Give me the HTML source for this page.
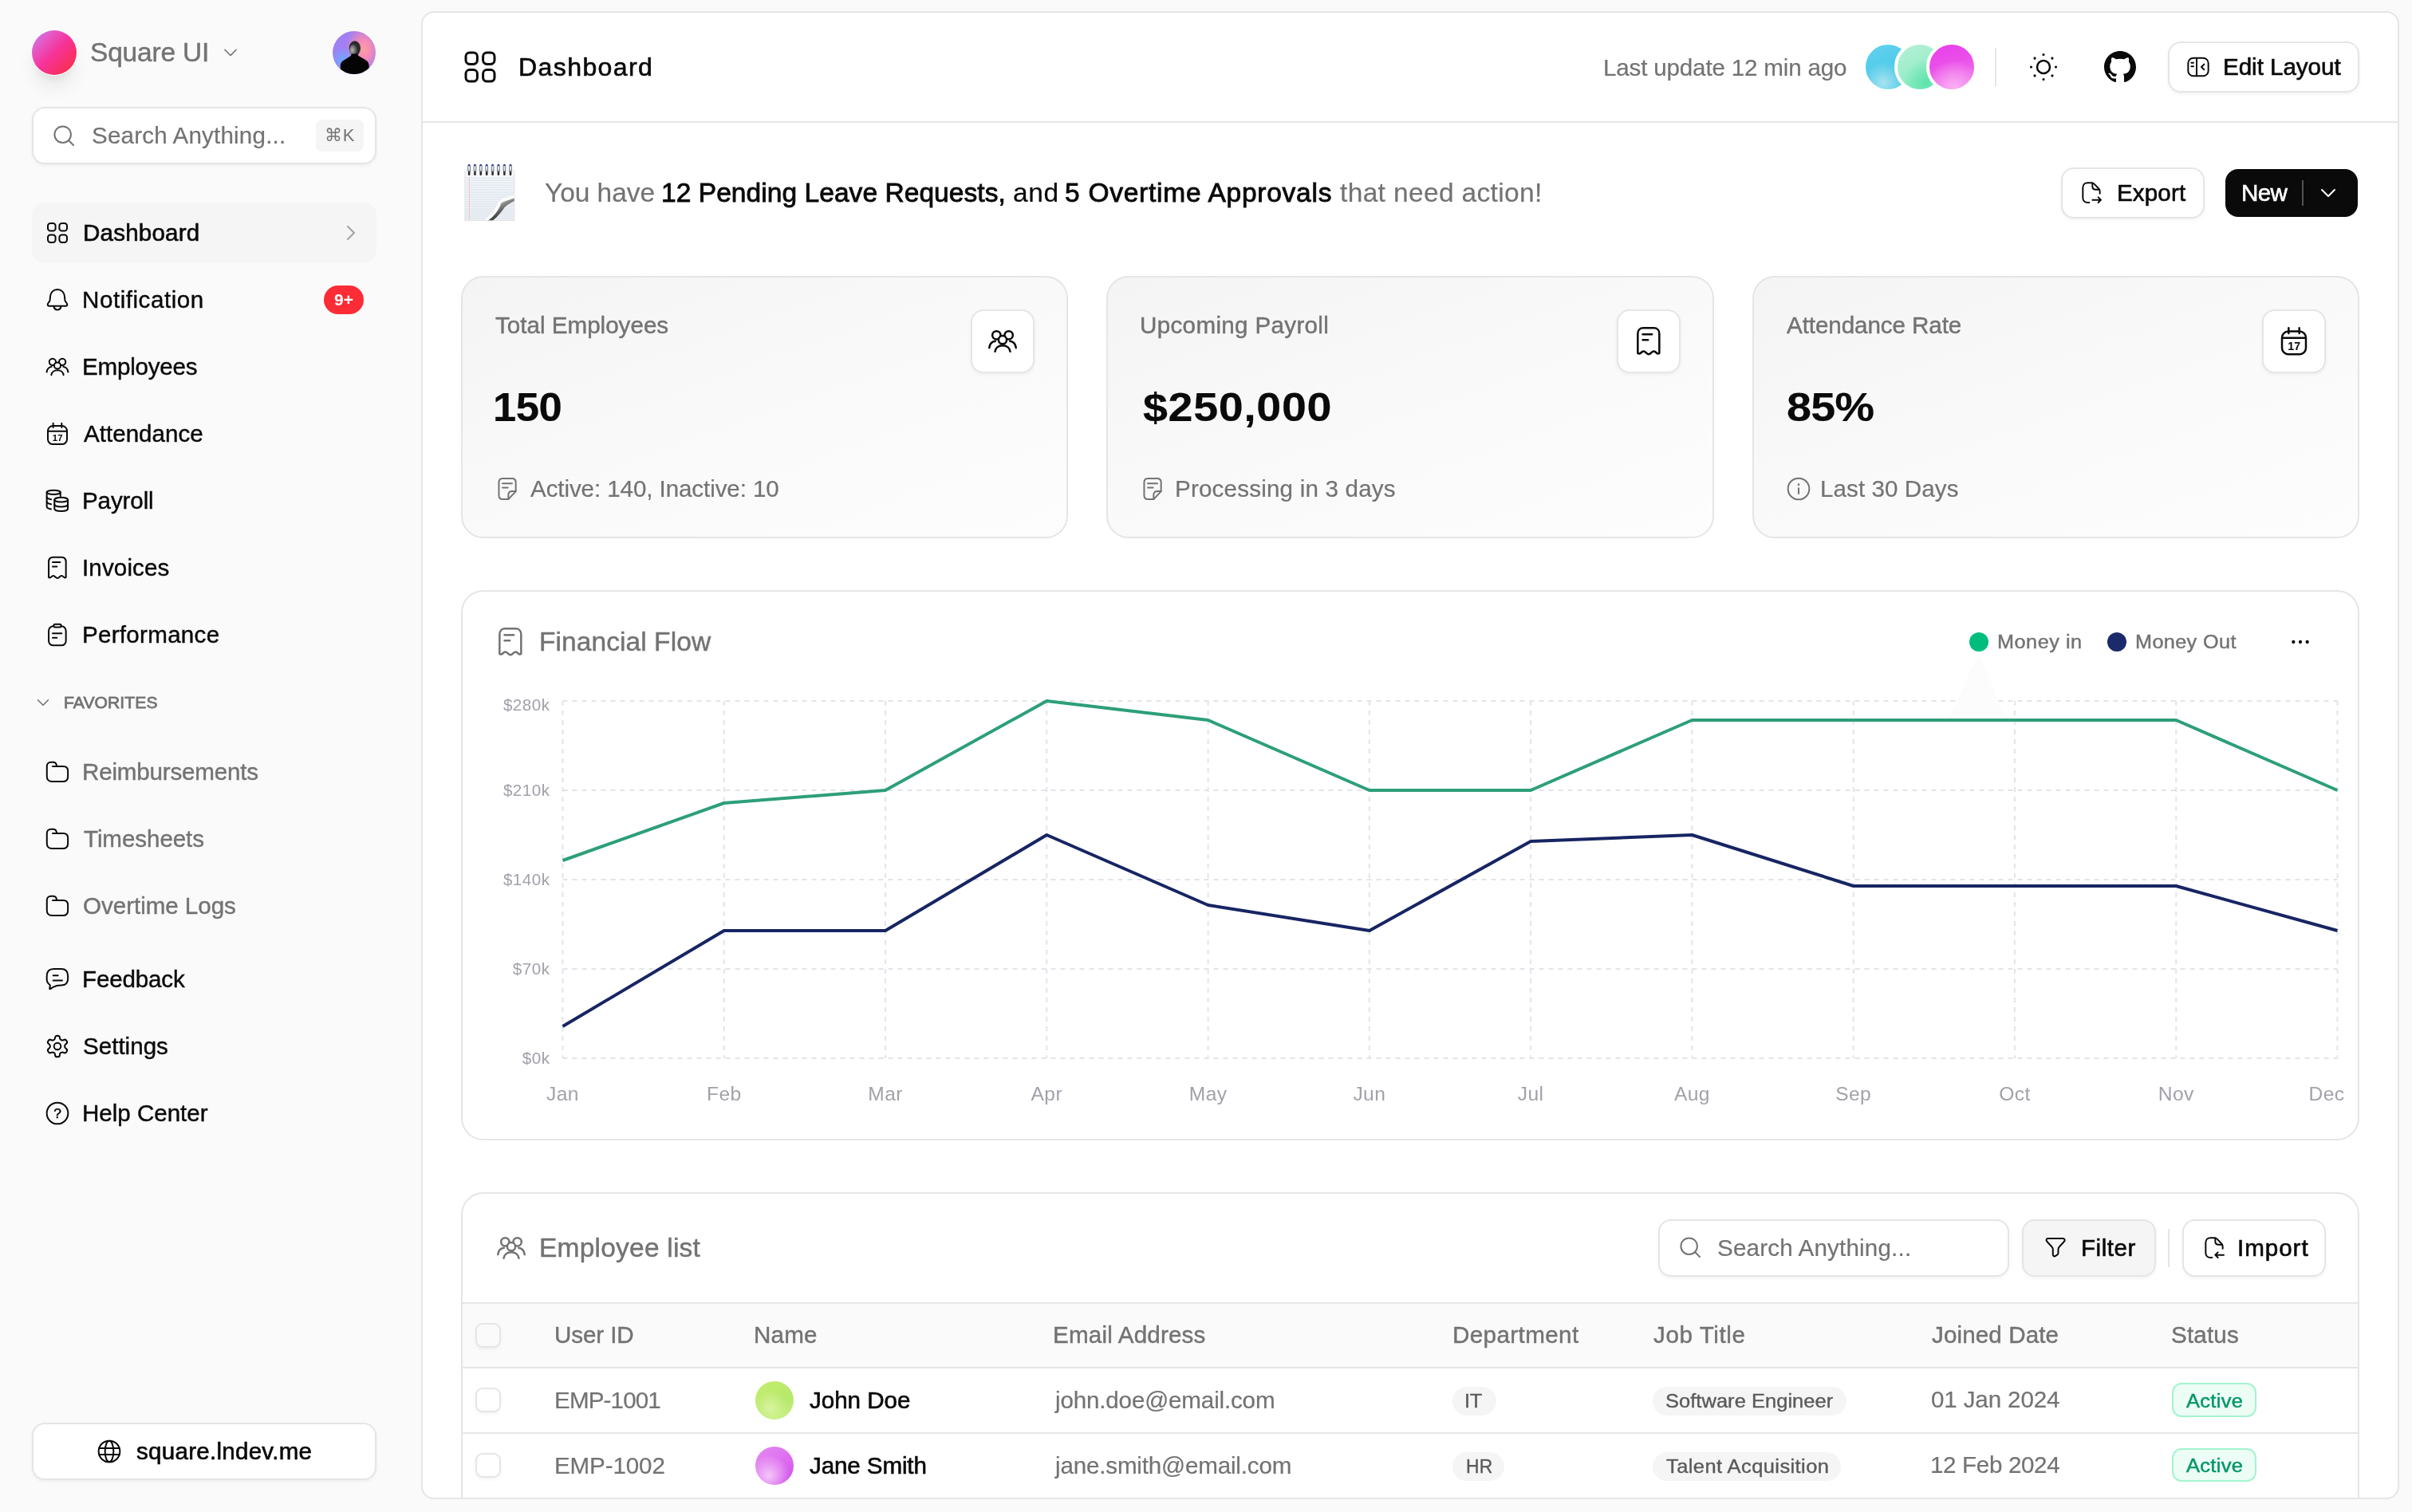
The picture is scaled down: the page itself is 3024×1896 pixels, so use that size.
<!DOCTYPE html>
<html lang="en">
<head>
<meta charset="utf-8">
<title>Square UI - Dashboard</title>
<style>
*{box-sizing:border-box;margin:0;padding:0}
html{zoom:2;background:#fafafa}
body{will-change:transform;width:1512px;height:948px;position:relative;overflow:hidden;background:#fafafa;color:#0a0a0a;
 font-family:"Liberation Sans",sans-serif;font-size:14px;line-height:20px}
svg{display:block;overflow:visible}
.ic{fill:none;stroke:currentColor;stroke-width:1.5;stroke-linecap:round;stroke-linejoin:round}
.abs{position:absolute}
.muted{color:#737373}
.t{position:absolute;white-space:nowrap;line-height:1;transform:scaleX(1.035);transform-origin:0 50%;-webkit-text-stroke:.1px currentColor}
.nv{-webkit-text-stroke:.2px currentColor}
.m{-webkit-text-stroke:.3px currentColor}
.m2{-webkit-text-stroke:.22px currentColor}
.sb{color:#0a0a0a;-webkit-text-stroke:.42px #0a0a0a}
#logo{left:20px;top:19px;width:28px;height:28px;border-radius:50%;background:linear-gradient(135deg,#c084fc 0%,#e657c4 27%,#f6339a 50%,#f83068 75%,#fb2c36 100%);box-shadow:0 0 0 .5px rgba(255,255,255,.9),0 9px 13px -3px rgba(0,0,0,.10),0 4px 6px -3px rgba(0,0,0,.08)}
#ava{left:208.5px;top:19.5px;width:27px;height:27px;border-radius:50%;overflow:hidden;background:radial-gradient(circle at 24% 68%,#6fa8ff 0%,rgba(111,168,255,0) 30%),radial-gradient(ellipse 42% 55% at 72% 42%,#fba09e 0%,#f58ab8 38%,rgba(240,138,200,0) 100%),#a080f2}
.sbox{left:20px;top:67px;width:216px;height:36px;background:#fff;border:1px solid #e5e5e5;border-radius:8px;box-shadow:0 1px 2px rgba(0,0,0,.05)}
.kbd{left:198px;top:75px;width:30px;height:20px;background:#f5f5f5;border-radius:4px;color:#737373;font-size:11px;text-align:center;line-height:20px;letter-spacing:.2px}
.nav{position:absolute;left:20px;width:216px;height:38px;border-radius:8px}
.nav svg{--bg:#fafafa;position:absolute;left:8px;top:11px;width:16px;height:16px}

.nav.on{background:#f5f5f5}
.nav.on svg{--bg:#f5f5f5}


.badge9{position:absolute;right:8px;top:10px;width:25px;height:18px;border-radius:9px;background:#fb2c36;color:#fff;font-size:10.5px;font-weight:700;text-align:center;line-height:18px}
#foot{left:20px;top:892px;width:216px;height:36px;background:#fff;border:1px solid #e5e5e5;border-radius:8px;box-shadow:0 1px 2px rgba(0,0,0,.05)}
#panel{left:264px;top:7px;width:1240px;height:933px;background:#fff;border:1px solid #e5e5e5;border-radius:8px;overflow:hidden}
#hdr{left:0;top:0;width:1238px;height:69px;border-bottom:1px solid #e5e5e5}
.btn{position:absolute;background:#fff;border:1px solid #e5e5e5;border-radius:8px;box-shadow:0 1px 2px rgba(0,0,0,.05)}
.card{position:absolute;border:1px solid #e5e5e5;border-radius:14px;background:#fff}
.stat{background:linear-gradient(160deg,#f4f4f4 0%,#f9f9f9 45%,#fdfdfd 100%)}
.ibox{position:absolute;right:20px;top:20px;width:40px;height:40px;background:#fff;border:1px solid #e5e5e5;border-radius:8px;box-shadow:0 1px 2px rgba(0,0,0,.05);display:flex;align-items:center;justify-content:center}
.val{font-weight:700;-webkit-text-stroke:.1px #0a0a0a;transform:scaleX(1.1)}
.ax{fill:#a1a1aa;font-family:"Liberation Sans",sans-serif}
.pill{position:absolute;height:18px;border-radius:9px;background:#f5f5f5;color:#5f5f5f;font-size:12.2px;line-height:18px;padding:0 8px;white-space:nowrap;letter-spacing:.25px;-webkit-text-stroke:.2px currentColor}
.act{position:absolute;height:22px;border-radius:6px;background:#ecfdf5;border:1px solid #a4f4cf;color:#059669;font-size:12.2px;line-height:20px;padding:0 7.5px;white-space:nowrap;letter-spacing:.25px;-webkit-text-stroke:.25px currentColor}
.cb{position:absolute;width:15.8px;height:15.8px;border-radius:4.5px;background:transparent;border:1px solid #e5e5e5;box-shadow:0 1px 2px rgba(0,0,0,.05)}
.pillbg{position:absolute;height:18px;border-radius:9px;background:#f5f5f5}
.pilltx{color:#5a5a5a;-webkit-text-stroke:.2px currentColor}
.actbg{position:absolute;height:21.4px;border-radius:6px;background:#ecfdf5;border:1px solid #a4f4cf}
.acttx{color:#059669;-webkit-text-stroke:.25px currentColor}

</style>
</head>
<body>
<!-- SIDEBAR -->
<div id="logo" class="abs"></div>
<div class="t muted m2" style="left:56.45px;top:25px;font-size:16.2px;letter-spacing:-0.092px;">Square UI</div>
<svg class="ic abs muted" style="left:137.5px;top:25.9px;width:14px;height:14px" viewBox="0 0 24 24" ><path d="M6 9l6 6 6-6"/></svg>
<div id="ava" class="abs"><svg viewBox="0 0 27 27" width="27" height="27"><defs><radialGradient id="fg" cx=".35" cy=".5" r=".7"><stop offset="0" stop-color="#b8b8b8"/><stop offset=".55" stop-color="#6a6a6a"/><stop offset="1" stop-color="#2a2a2a"/></radialGradient></defs><ellipse cx="13.9" cy="10.8" rx="3.6" ry="4.7" fill="#2b2b2b"/><ellipse cx="13.1" cy="11.9" rx="2.5" ry="3.5" fill="url(#fg)"/><path d="M4.9 27V22c0-1.8.7-3 2.2-3.8l4-2.5c.5-.3.8-.8.8-1.4h3.8c0 .7.4 1.2 1 1.5l3.8 2.2c1.5.8 2.3 2.1 2.3 3.8V27z" fill="#040404"/></svg></div>
<div class="abs sbox"></div>
<svg class="ic abs muted" style="left:32px;top:77px;width:16px;height:16px" viewBox="0 0 24 24" ><circle cx="11" cy="11" r="7.7"/><path d="M16.7 16.7l4.3 4.3"/></svg>
<div class="t muted" style="left:57.7px;top:78px;font-size:14.3px;letter-spacing:0.084px;">Search Anything...</div>
<div class="abs kbd">&#8984;K</div>
<div class="nav on" style="top:127px"><svg class="ic" style="" viewBox="0 0 24 24" ><rect x="3" y="3" width="7.2" height="7.2" rx="2.4"/><rect x="13.8" y="3" width="7.2" height="7.2" rx="2.4"/><rect x="3" y="13.8" width="7.2" height="7.2" rx="2.4"/><rect x="13.8" y="13.8" width="7.2" height="7.2" rx="2.4"/></svg><svg class="ic" style="left:auto;right:8px;top:11px;width:16px;height:16px;color:#a1a1a1" viewBox="0 0 24 24" ><path d="M9 6l6 6-6 6"/></svg></div>
<div class="t m" style="left:52.2px;top:139px;font-size:14.3px;letter-spacing:0.086px;">Dashboard</div>
<div class="nav " style="top:169px"><svg class="ic" style="" viewBox="0 0 24 24" ><path d="M12 2.2c-3.9 0-6.6 3-6.8 6.9-.1 1.6 0 3.3-.6 4.3-.4.7-1.8 1.7-1.8 2.9 0 1 .7 1.5 1.5 1.5h15.4c.8 0 1.5-.5 1.5-1.5 0-1.2-1.4-2.2-1.8-2.9-.6-1-.5-2.7-.6-4.3-.2-3.9-2.9-6.9-6.8-6.9z"/><path d="M8.6 18c.3 1.9 1.6 3.3 3.4 3.3s3.1-1.4 3.4-3.3"/></svg><b class="badge9">9+</b></div>
<div class="t nv" style="left:51.7px;top:181px;font-size:14.3px;letter-spacing:0.254px;">Notification</div>
<div class="nav " style="top:211px"><svg class="ic" style="" viewBox="0 0 24 24" ><circle cx="7.4" cy="7.4" r="3.1"/><circle cx="16.6" cy="7.4" r="3.1"/><circle cx="12" cy="10.9" r="3.05" fill="var(--bg,#fff)"/><path d="M6.3 19.7c.2-2.6 2.5-4.6 5.7-4.6s5.5 2 5.7 4.6"/><path d="M1.95 16.9c.3-2.8 2-4.6 4.5-5"/><path d="M22.05 16.9c-.3-2.8-2-4.6-4.5-5"/></svg></div>
<div class="t nv" style="left:51.7px;top:223px;font-size:14.3px;letter-spacing:-0.114px;">Employees</div>
<div class="nav " style="top:253px"><svg class="ic" style="" viewBox="0 0 24 24" ><path d="M8 2v4M16 2v4"/><rect x="3" y="4.5" width="18" height="17.3" rx="4.8"/><path d="M3.2 9.5h17.6"/><text x="12.1" y="18.6" text-anchor="middle" font-size="8.5" font-weight="700" stroke="none" fill="currentColor" font-family="Liberation Sans,sans-serif">17</text></svg></div>
<div class="t nv" style="left:52.7px;top:265px;font-size:14.3px;letter-spacing:-0.002px;">Attendance</div>
<div class="nav " style="top:295px"><svg class="ic" style="" viewBox="0 0 24 24" ><ellipse cx="8.4" cy="4" rx="6.4" ry="2"/><path d="M2 4v13.5c0 1 1.6 1.9 4 2.3"/><path d="M2 8.5c0 1 1.6 1.8 4 2.2M2 13c0 1 1.6 1.8 4 2.2M14.8 4v3.5"/><ellipse cx="15.5" cy="11" rx="6.3" ry="2.1"/><path d="M9.2 11v8.5c0 1.3 2.8 2.3 6.3 2.3s6.3-1 6.3-2.3V11"/><path d="M9.2 15.3c0 1.3 2.8 2.3 6.3 2.3s6.3-1 6.3-2.3"/></svg></div>
<div class="t nv" style="left:51.7px;top:307px;font-size:14.3px;letter-spacing:-0.063px;">Payroll</div>
<div class="nav " style="top:337px"><svg class="ic" style="" viewBox="0 0 24 24" ><path d="M3.8 21V6.3C3.8 3.8 5.3 2 8 2h7.8c2.7 0 4.2 1.8 4.2 4.3V21c-.8.5-1.5.3-2.1-.3-.7-.7-1.3-1.2-2-1.2s-1.3.4-2 1.1c-.6.6-1.2 1.1-1.9 1.1s-1.3-.5-1.9-1.1c-.7-.7-1.3-1.1-2-1.1s-1.3.5-2 1.2c-.6.6-1.3.8-2.3.3z"/><path d="M7.5 6.8h7M7.5 10.9h4"/></svg></div>
<div class="t nv" style="left:51.7px;top:349px;font-size:14.3px;letter-spacing:0.058px;">Invoices</div>
<div class="nav " style="top:379px"><svg class="ic" style="" viewBox="0 0 24 24" ><rect x="3.8" y="4" width="16.2" height="18" rx="4.2"/><rect x="8.5" y="2" width="7" height="2.9" rx="1.45" fill="var(--bg,#fff)"/><path d="M7.5 10.7h8.5M7.5 14.9h4"/></svg></div>
<div class="t nv" style="left:51.7px;top:391px;font-size:14.3px;letter-spacing:0.13px;">Performance</div>
<div class="nav fav" style="top:465px"><svg class="ic" style="" viewBox="0 0 24 24" ><path d="M7.5 6.75H17.5c2.7 0 4.35 1.65 4.35 4.35v5.15c0 3.05-1.75 4.8-4.8 4.8H6.9c-3.05 0-4.8-1.75-4.8-4.8V6.65c0-2.35 1.45-3.8 3.8-3.8h2.2c1.6 0 2.5.8 2.9 2.15l.55 1.75"/></svg></div>
<div class="t muted nv" style="left:51.7px;top:477px;font-size:14.3px;letter-spacing:-0.099px;">Reimbursements</div>
<div class="nav fav" style="top:507px"><svg class="ic" style="" viewBox="0 0 24 24" ><path d="M7.5 6.75H17.5c2.7 0 4.35 1.65 4.35 4.35v5.15c0 3.05-1.75 4.8-4.8 4.8H6.9c-3.05 0-4.8-1.75-4.8-4.8V6.65c0-2.35 1.45-3.8 3.8-3.8h2.2c1.6 0 2.5.8 2.9 2.15l.55 1.75"/></svg></div>
<div class="t muted nv" style="left:52.6px;top:519px;font-size:14.3px;letter-spacing:-0.044px;">Timesheets</div>
<div class="nav fav" style="top:549px"><svg class="ic" style="" viewBox="0 0 24 24" ><path d="M7.5 6.75H17.5c2.7 0 4.35 1.65 4.35 4.35v5.15c0 3.05-1.75 4.8-4.8 4.8H6.9c-3.05 0-4.8-1.75-4.8-4.8V6.65c0-2.35 1.45-3.8 3.8-3.8h2.2c1.6 0 2.5.8 2.9 2.15l.55 1.75"/></svg></div>
<div class="t muted nv" style="left:52.2px;top:561px;font-size:14.3px;letter-spacing:-0.021px;">Overtime Logs</div>
<div class="nav " style="top:595px"><svg class="ic" style="" viewBox="0 0 24 24" ><path d="M2 9.3C2 5 4 2.25 8.5 2.25h7c4.5 0 6.35 2.5 6.35 6.5v2.7c0 4-2 6.2-6.3 6.2-2.9 0-5.3.4-7.3 1.5-.9.5-1.9 1.2-2.7 1.9-.5.4-1.1 0-.9-.6l.5-2.2c.1-.5-.1-.9-.5-1.2C2.8 15.9 2 14.1 2 11.7z"/><path d="M8 8.4h4.5M8 13.2h8.5"/></svg></div>
<div class="t nv" style="left:51.7px;top:607px;font-size:14.3px;letter-spacing:-0.087px;">Feedback</div>
<div class="nav " style="top:637px"><svg class="ic" style="" viewBox="0 0 24 24" ><path d="M12.22 2h-.44a2 2 0 0 0-2 2v.180a2 2 0 0 1-1 1.73l-.430.25a2 2 0 0 1-2 0l-.150-.080a2 2 0 0 0-2.73.730l-.220.38a2 2 0 0 0 .730 2.73l.150.1a2 2 0 0 1 1 1.72v.510a2 2 0 0 1-1 1.74l-.150.09a2 2 0 0 0-.730 2.73l.220.38a2 2 0 0 0 2.73.730l.150-.080a2 2 0 0 1 2 0l.430.25a2 2 0 0 1 1 1.73V20a2 2 0 0 0 2 2h.440a2 2 0 0 0 2-2v-.180a2 2 0 0 1 1-1.73l.430-.250a2 2 0 0 1 2 0l.150.08a2 2 0 0 0 2.73-.730l.220-.390a2 2 0 0 0-.730-2.73l-.150-.080a2 2 0 0 1-1-1.74v-.500a2 2 0 0 1 1-1.74l.150-.090a2 2 0 0 0 .730-2.73l-.220-.380a2 2 0 0 0-2.73-.730l-.150.08a2 2 0 0 1-2 0l-.430-.250a2 2 0 0 1-1-1.73V4a2 2 0 0 0-2-2z"/><circle cx="12" cy="12" r="3.2"/></svg></div>
<div class="t nv" style="left:52.2px;top:649px;font-size:14.3px;letter-spacing:-0.003px;">Settings</div>
<div class="nav " style="top:679px"><svg class="ic" style="" viewBox="0 0 24 24" ><circle cx="12" cy="12" r="10"/><text x="12" y="16.8" text-anchor="middle" font-size="13" stroke="currentColor" stroke-width=".4" fill="currentColor" font-family="Liberation Sans,sans-serif">?</text></svg></div>
<div class="t nv" style="left:51.7px;top:691px;font-size:14.3px;letter-spacing:-0.02px;">Help Center</div>
<svg class="ic abs muted" style="left:20.5px;top:434px;width:13px;height:13px" viewBox="0 0 24 24" ><path d="M6 9l6 6 6-6"/></svg>
<div class="t muted" style="left:39.8px;top:435.7px;font-size:10.2px;letter-spacing:0.037px;-webkit-text-stroke:.38px currentColor">FAVORITES</div>
<div id="foot" class="abs"></div>
<svg class="ic abs" style="left:60.6px;top:902px;width:16px;height:16px" viewBox="0 0 24 24" ><circle cx="12" cy="12" r="10"/><ellipse cx="12" cy="12" rx="4" ry="10"/><path d="M2.5 9h19M2.5 15h19"/></svg>
<div class="t m" style="left:85.5px;top:903px;font-size:14.3px;letter-spacing:0.118px;">square.lndev.me</div>
<!-- MAIN PANEL -->
<div id="panel" class="abs">
<div id="hdr" class="abs"></div>
<svg class="ic abs" style="left:24px;top:22px;width:24px;height:24px" viewBox="0 0 24 24" ><rect x="3" y="3" width="7.2" height="7.2" rx="2.4"/><rect x="13.8" y="3" width="7.2" height="7.2" rx="2.4"/><rect x="3" y="13.8" width="7.2" height="7.2" rx="2.4"/><rect x="13.8" y="13.8" width="7.2" height="7.2" rx="2.4"/></svg>
<div class="t m" style="left:59.75px;top:26.3px;font-size:15.5px;letter-spacing:0.664px;">Dashboard</div>
<div class="t muted" style="left:740.2px;top:27.5px;font-size:14.3px;letter-spacing:-0.087px;">Last update 12 min ago</div>
<div class="abs" style="left:902.7px;top:17.9px;width:32px;height:32px;border-radius:50%;border:2px solid #fff;background:radial-gradient(circle at 40% 85%,#a6e3ee 0%,rgba(166,227,238,0) 45%),linear-gradient(160deg,#63d2ee 0%,#4cc9ea 60%,#59cdea 100%)"></div>
<div class="abs" style="left:922.7px;top:17.9px;width:32px;height:32px;border-radius:50%;border:2px solid #fff;background:radial-gradient(circle at 65% 85%,#5fe3ad 0%,rgba(95,227,173,0) 50%),linear-gradient(160deg,#b4f0d6 0%,#9aedc8 60%,#7fe7bb 100%)"></div>
<div class="abs" style="left:942.7px;top:17.9px;width:32px;height:32px;border-radius:50%;border:2px solid #fff;background:radial-gradient(circle at 55% 95%,#f9aef3 0%,rgba(249,174,243,0) 55%),linear-gradient(165deg,#e83fea 0%,#ea4ee9 40%,#f283ee 100%)"></div>
<div class="abs" style="left:985.4px;top:22px;width:1px;height:24px;background:#e5e5e5"></div>
<svg class="ic abs" style="left:1005.8px;top:24px;width:20px;height:20px" viewBox="0 0 24 24" ><circle cx="12" cy="12" r="4.8"/><path d="M12 2.7v.01M12 21.3v.01M2.7 12h.01M21.3 12h.01M5.42 5.42l.01.01M18.58 5.42l-.01.01M5.42 18.58l.01-.01M18.58 18.58l-.01-.01" stroke-width="1.9"/></svg>
<svg class="abs" style="left:1054px;top:24px;width:20px;height:20px" viewBox="0 0 16 16"><path fill="#0a0a0a" d="M8 0c4.42 0 8 3.58 8 8a8.013 8.013 0 0 1-5.45 7.59c-.4.08-.550-.170-.550-.380 0-.270.01-1.13.010-2.2 0-.750-.250-1.23-.540-1.48 1.78-.2 3.65-.880 3.65-3.95 0-.880-.310-1.59-.820-2.15.080-.2.36-1.02-.080-2.12 0 0-.670-.220-2.2.820-.640-.180-1.32-.270-2-.270-.680 0-1.36.090-2 .270-1.53-1.03-2.2-.820-2.2-.820-.440 1.1-.160 1.92-.080 2.12-.510.56-.820 1.28-.820 2.15 0 3.06 1.86 3.75 3.64 3.95-.230.2-.440.55-.510 1.07-.460.21-1.61.550-2.33-.660-.150-.240-.6-.830-1.23-.820-.670.01-.270.38.010.53.340.19.730.9.82 1.13.160.45.680 1.31 2.69.940 0 .670.01 1.3.010 1.49 0 .210-.150.45-.550.38A7.995 7.995 0 0 1 0 8c0-4.42 3.58-8 8-8Z"/></svg>
<div class="btn" style="left:1094px;top:18px;width:120px;height:32px"></div>
<svg class="ic abs" style="left:1105px;top:26px;width:16px;height:16px" viewBox="0 0 24 24" ><rect x="2.5" y="3.5" width="19" height="17" rx="5"/><path d="M10.5 3.8v16.4"/><path d="M5.5 8h2M5.5 11.5h2"/><path d="M17.5 9.5l-2.5 2.5 2.5 2.5"/></svg>
<div class="t m" style="left:1128.7px;top:27px;font-size:14.3px;letter-spacing:-0.02px;">Edit Layout</div>
<svg class="abs" style="left:25.5px;top:94px;width:34px;height:38px" viewBox="0 0 34 38">
<defs><linearGradient id="pg" x1="0" y1="0" x2="0" y2="1"><stop offset="0" stop-color="#f7f7f8"/><stop offset="1" stop-color="#ededef"/></linearGradient>
<linearGradient id="cg" x1=".25" y1=".1" x2=".8" y2=".95"><stop offset="0" stop-color="#e9e9e9"/><stop offset=".3" stop-color="#8e8e8e"/><stop offset=".65" stop-color="#3e3e3e"/><stop offset="1" stop-color="#1c1c1c"/></linearGradient>
<clipPath id="pc"><rect x=".9" y="5" width="31.1" height="31.4"/></clipPath></defs>
<rect x=".9" y="5" width="31.1" height="31.4" fill="url(#pg)"/>
<g clip-path="url(#pc)"><path d="M1 9.6h31M1 11.09h31M1 12.58h31M1 14.07h31M1 15.56h31M1 17.05h31M1 18.54h31M1 20.03h31M1 21.52h31M1 23.01h31M1 24.5h31M1 25.99h31M1 27.48h31M1 28.97h31M1 30.46h31M1 31.95h31M1 33.44h31M1 34.93h31" stroke="#d6e4f3" stroke-width=".5" fill="none"/>
<path d="M3.7 9.3v27.1" stroke="#f3bcbc" stroke-width=".4"/>
<path d="M32 20C28.5 21.5 24.5 22.3 22 24.2 20.8 28.5 16.5 33.8 12.5 36.4H15.3C19.5 33.5 22.5 29 23.5 25.6 25.5 24 29 23.5 32 22.3z" fill="#fff" opacity=".8"/>
<path d="M32 22.3C29 23.5 25.5 24 23.5 25.6 22.5 29 19.5 33.5 15.3 36.4H18.2C21.5 33.8 24.2 30.5 25.8 28 27.5 26.3 30 25 32 24z" fill="url(#cg)"/></g>
<rect x=".9" y="5" width="31.1" height="31.4" fill="none" stroke="#dcdcde" stroke-width=".35"/>
<path d="M3.57 4.6v2.8" stroke="#2b2b30" stroke-width="1.3" stroke-linecap="round"/><ellipse cx="3.57" cy="3.3" rx=".750" ry="2.3" fill="#e9f1fb" stroke="#5d6272" stroke-width=".450"/><ellipse cx="3.57" cy="1.5" rx=".620" ry=".650" fill="#2c4099"/><path d="M7.23 4.6v2.8" stroke="#2b2b30" stroke-width="1.3" stroke-linecap="round"/><ellipse cx="7.23" cy="3.3" rx=".750" ry="2.3" fill="#e9f1fb" stroke="#5d6272" stroke-width=".450"/><ellipse cx="7.23" cy="1.5" rx=".620" ry=".650" fill="#2c4099"/><path d="M10.9 4.6v2.8" stroke="#2b2b30" stroke-width="1.3" stroke-linecap="round"/><ellipse cx="10.9" cy="3.3" rx=".750" ry="2.3" fill="#e9f1fb" stroke="#5d6272" stroke-width=".450"/><ellipse cx="10.9" cy="1.5" rx=".620" ry=".650" fill="#2c4099"/><path d="M14.6 4.6v2.8" stroke="#2b2b30" stroke-width="1.3" stroke-linecap="round"/><ellipse cx="14.6" cy="3.3" rx=".750" ry="2.3" fill="#e9f1fb" stroke="#5d6272" stroke-width=".450"/><ellipse cx="14.6" cy="1.5" rx=".620" ry=".650" fill="#2c4099"/><path d="M18.3 4.6v2.8" stroke="#2b2b30" stroke-width="1.3" stroke-linecap="round"/><ellipse cx="18.3" cy="3.3" rx=".750" ry="2.3" fill="#e9f1fb" stroke="#5d6272" stroke-width=".450"/><ellipse cx="18.3" cy="1.5" rx=".620" ry=".650" fill="#2c4099"/><path d="M21.96 4.6v2.8" stroke="#2b2b30" stroke-width="1.3" stroke-linecap="round"/><ellipse cx="21.96" cy="3.3" rx=".750" ry="2.3" fill="#e9f1fb" stroke="#5d6272" stroke-width=".450"/><ellipse cx="21.96" cy="1.5" rx=".620" ry=".650" fill="#2c4099"/><path d="M25.7 4.6v2.8" stroke="#2b2b30" stroke-width="1.3" stroke-linecap="round"/><ellipse cx="25.7" cy="3.3" rx=".750" ry="2.3" fill="#e9f1fb" stroke="#5d6272" stroke-width=".450"/><ellipse cx="25.7" cy="1.5" rx=".620" ry=".650" fill="#2c4099"/><path d="M29.5 4.6v2.8" stroke="#2b2b30" stroke-width="1.3" stroke-linecap="round"/><ellipse cx="29.5" cy="3.3" rx=".750" ry="2.3" fill="#e9f1fb" stroke="#5d6272" stroke-width=".450"/><ellipse cx="29.5" cy="1.5" rx=".620" ry=".650" fill="#2c4099"/>
</svg>
<div class="t muted" style="left:76.25px;top:104.8px;font-size:16.2px;letter-spacing:-0.033px;">You have</div>
<div class="t sb" style="left:149.3px;top:104.8px;font-size:16.2px;letter-spacing:0.024px;">12 Pending Leave Requests,</div>
<div class="t " style="left:370.1px;top:104.8px;font-size:16.2px;letter-spacing:0.32px;">and</div>
<div class="t sb" style="left:402.5px;top:104.8px;font-size:16.2px;letter-spacing:0.355px;">5 Overtime Approvals</div>
<div class="t muted" style="left:574.9px;top:104.8px;font-size:16.2px;letter-spacing:0.164px;">that need action!</div>
<div class="btn" style="left:1027px;top:97px;width:90px;height:32px"></div>
<svg class="ic abs" style="left:1037.8px;top:105px;width:16px;height:16px" viewBox="0 0 24 24" ><path d="M20 12.5V10.6c0-1-.4-2-1.1-2.7l-4.2-4.4C14 2.8 13 2.4 12 2.4H8.5C5.8 2.4 4 4.2 4 6.9v9.6c0 2.7 1.8 4.5 4.5 4.5H10"/><path d="M13 2.7v2.9c0 2 1.2 3.2 3.2 3.2h3"/><path d="M13 18.5h8M18.5 16l2.5 2.5-2.5 2.5"/></svg>
<div class="t m" style="left:1062px;top:106px;font-size:14.3px;letter-spacing:0.06px;">Export</div>
<div class="abs" style="left:1130px;top:98px;width:83px;height:30px;border-radius:8px;background:#0a0a0a"></div>
<div class="t m" style="left:1140.2px;top:106px;font-size:14.3px;letter-spacing:-0.3px;color:#fff">New</div>
<div class="abs" style="left:1178px;top:105px;width:1px;height:16px;background:#525252"></div>
<svg class="ic abs" style="left:1186.5px;top:105px;width:16px;height:16px;color:#fff" viewBox="0 0 24 24" ><path d="M6 9l6 6 6-6"/></svg>
<div class="card stat" style="left:24px;top:165px;width:380.67px;height:164.5px">
<div class="ibox"><svg class="ic" style="width:20px;height:20px" viewBox="0 0 24 24" ><circle cx="7.4" cy="7.4" r="3.1"/><circle cx="16.6" cy="7.4" r="3.1"/><circle cx="12" cy="10.9" r="3.05" fill="var(--bg,#fff)"/><path d="M6.3 19.7c.2-2.6 2.5-4.6 5.7-4.6s5.5 2 5.7 4.6"/><path d="M1.95 16.9c.3-2.8 2-4.6 4.5-5"/><path d="M22.05 16.9c-.3-2.8-2-4.6-4.5-5"/></svg></div>
<svg class="ic abs muted" style="left:20px;top:124.5px;width:16px;height:16px" viewBox="0 0 24 24" ><path d="M7.6 2.2h8.8c2.3 0 3.6 1.3 3.6 3.6v8.5l-7 7.5H7.6c-2.3 0-3.5-1.3-3.5-3.6V5.8c0-2.3 1.2-3.6 3.5-3.6z"/><path d="M20 14.3h-3.4c-2.2 0-3.6 1.3-3.6 3.5v4"/><path d="M7.5 7h9M7.5 10.9h5"/></svg>
</div>
<div class="t muted m2" style="left:45.7px;top:189.2px;font-size:14.3px;letter-spacing:-0px;">Total Employees</div>
<div class="t val" style="left:44.2px;top:235px;font-size:25.3px;letter-spacing:-0.25px;transform:scaleX(1.04)">150</div>
<div class="t muted" style="left:67.7px;top:291.4px;font-size:14.3px;letter-spacing:-0.05px;">Active: 140, Inactive: 10</div>
<div class="card stat" style="left:428.67px;top:165px;width:380.67px;height:164.5px">
<div class="ibox"><svg class="ic" style="width:20px;height:20px" viewBox="0 0 24 24" ><path d="M3.8 21V6.3C3.8 3.8 5.3 2 8 2h7.8c2.7 0 4.2 1.8 4.2 4.3V21c-.8.5-1.5.3-2.1-.3-.7-.7-1.3-1.2-2-1.2s-1.3.4-2 1.1c-.6.6-1.2 1.1-1.9 1.1s-1.3-.5-1.9-1.1c-.7-.7-1.3-1.1-2-1.1s-1.3.5-2 1.2c-.6.6-1.3.8-2.3.3z"/><path d="M7.5 6.8h7M7.5 10.9h4"/></svg></div>
<svg class="ic abs muted" style="left:20px;top:124.5px;width:16px;height:16px" viewBox="0 0 24 24" ><path d="M7.6 2.2h8.8c2.3 0 3.6 1.3 3.6 3.6v8.5l-7 7.5H7.6c-2.3 0-3.5-1.3-3.5-3.6V5.8c0-2.3 1.2-3.6 3.5-3.6z"/><path d="M20 14.3h-3.4c-2.2 0-3.6 1.3-3.6 3.5v4"/><path d="M7.5 7h9M7.5 10.9h5"/></svg>
</div>
<div class="t muted m2" style="left:449.37px;top:189.2px;font-size:14.3px;letter-spacing:0.158px;">Upcoming Payroll</div>
<div class="t val" style="left:451.37px;top:235px;font-size:25.3px;letter-spacing:0.282px;">$250,000</div>
<div class="t muted" style="left:471.37px;top:291.4px;font-size:14.3px;letter-spacing:0.09px;">Processing in 3 days</div>
<div class="card stat" style="left:833.34px;top:165px;width:380.67px;height:164.5px">
<div class="ibox"><svg class="ic" style="width:20px;height:20px" viewBox="0 0 24 24" ><path d="M8 2v4M16 2v4"/><rect x="3" y="4.5" width="18" height="17.3" rx="4.8"/><path d="M3.2 9.5h17.6"/><text x="12.1" y="18.6" text-anchor="middle" font-size="8.5" font-weight="700" stroke="none" fill="currentColor" font-family="Liberation Sans,sans-serif">17</text></svg></div>
<svg class="ic abs muted" style="left:20px;top:124.5px;width:16px;height:16px" viewBox="0 0 24 24" ><circle cx="12" cy="12" r="10"/><path d="M12 11.5v5"/><path d="M12 8v.01" stroke-width="2"/></svg>
</div>
<div class="t muted m2" style="left:855.04px;top:189.2px;font-size:14.3px;letter-spacing:-0.041px;">Attendance Rate</div>
<div class="t val" style="left:855.24px;top:235px;font-size:25.3px;letter-spacing:-0.3px;">85%</div>
<div class="t muted" style="left:876.04px;top:291.4px;font-size:14.3px;letter-spacing:0.033px;">Last 30 Days</div>
<div class="card" style="left:24px;top:362px;width:1190px;height:345px"></div>
<svg class="ic abs muted" style="left:45px;top:384.6px;width:20px;height:20px" viewBox="0 0 24 24" ><path d="M3.8 21V6.3C3.8 3.8 5.3 2 8 2h7.8c2.7 0 4.2 1.8 4.2 4.3V21c-.8.5-1.5.3-2.1-.3-.7-.7-1.3-1.2-2-1.2s-1.3.4-2 1.1c-.6.6-1.2 1.1-1.9 1.1s-1.3-.5-1.9-1.1c-.7-.7-1.3-1.1-2-1.1s-1.3.5-2 1.2c-.6.6-1.3.8-2.3.3z"/><path d="M7.5 6.8h7M7.5 10.9h4"/></svg>
<div class="t muted m2" style="left:73.2px;top:386.5px;font-size:16.2px;letter-spacing:0.031px;">Financial Flow</div>
<div class="abs" style="left:969.5px;top:388.3px;width:12px;height:12px;border-radius:50%;background:#00bc7d"></div>
<div class="t muted m2" style="left:987.2px;top:388.5px;font-size:12.2px;letter-spacing:0.255px;">Money in</div>
<div class="abs" style="left:1056px;top:388.3px;width:12px;height:12px;border-radius:50%;background:#1b2a6b"></div>
<div class="t muted m2" style="left:1073.7px;top:388.5px;font-size:12.2px;letter-spacing:0.177px;">Money Out</div>
<svg class="abs" style="left:1169.2px;top:386.5px;width:16px;height:16px" viewBox="0 0 24 24" fill="#0a0a0a"><circle cx="5.5" cy="12" r="1.6"/><circle cx="12" cy="12" r="1.6"/><circle cx="18.5" cy="12" r="1.6"/></svg>
<svg class="abs" style="left:24px;top:362px;width:1190px;height:345px" viewBox="24 362 1190 345"><path d="M87.75 431.5H1200.25M87.75 487.5H1200.25M87.75 543.5H1200.25M87.75 599.5H1200.25M87.75 655.5H1200.25M87.75 431.5V655.5M188.89 431.5V655.5M290.02 431.5V655.5M391.16 431.5V655.5M492.3 431.5V655.5M593.43 431.5V655.5M694.57 431.5V655.5M795.7 431.5V655.5M896.84 431.5V655.5M997.98 431.5V655.5M1099.11 431.5V655.5M1200.25 431.5V655.5" fill="none" stroke="#e2e4e9" stroke-width="1" stroke-dasharray="3 3"/><polygon points="975.5,401 956.5,443.5 992.5,443.5" fill="#fcfcfd"/><polyline points="87.75,531.5 188.89,495.5 290.02,487.5 391.16,431.5 492.3,443.5 593.43,487.5 694.57,487.5 795.7,443.5 896.84,443.5 997.98,443.5 1099.11,443.5 1200.25,487.5" fill="none" stroke="#2d9f76" stroke-width="2" stroke-linejoin="round"/><polyline points="87.75,635.5 188.89,575.5 290.02,575.5 391.16,515.5 492.3,559.5 593.43,575.5 694.57,519.5 795.7,515.5 896.84,547.5 997.98,547.5 1099.11,547.5 1200.25,575.5" fill="none" stroke="#172563" stroke-width="2" stroke-linejoin="round"/><text x="79.75" y="437.3" text-anchor="end" class="ax" font-size="10.3" letter-spacing=".25">$280k</text><text x="79.75" y="491.1" text-anchor="end" class="ax" font-size="10.3" letter-spacing=".25">$210k</text><text x="79.75" y="547.1" text-anchor="end" class="ax" font-size="10.3" letter-spacing=".25">$140k</text><text x="79.75" y="603.1" text-anchor="end" class="ax" font-size="10.3" letter-spacing=".25">$70k</text><text x="79.75" y="659.1" text-anchor="end" class="ax" font-size="10.3" letter-spacing=".25">$0k</text><text x="87.75" y="681.8" text-anchor="middle" class="ax" font-size="12.3" letter-spacing=".2">Jan</text><text x="188.89" y="681.8" text-anchor="middle" class="ax" font-size="12.3" letter-spacing=".2">Feb</text><text x="290.02" y="681.8" text-anchor="middle" class="ax" font-size="12.3" letter-spacing=".2">Mar</text><text x="391.16" y="681.8" text-anchor="middle" class="ax" font-size="12.3" letter-spacing=".2">Apr</text><text x="492.3" y="681.8" text-anchor="middle" class="ax" font-size="12.3" letter-spacing=".2">May</text><text x="593.43" y="681.8" text-anchor="middle" class="ax" font-size="12.3" letter-spacing=".2">Jun</text><text x="694.57" y="681.8" text-anchor="middle" class="ax" font-size="12.3" letter-spacing=".2">Jul</text><text x="795.7" y="681.8" text-anchor="middle" class="ax" font-size="12.3" letter-spacing=".2">Aug</text><text x="896.84" y="681.8" text-anchor="middle" class="ax" font-size="12.3" letter-spacing=".2">Sep</text><text x="997.98" y="681.8" text-anchor="middle" class="ax" font-size="12.3" letter-spacing=".2">Oct</text><text x="1099.11" y="681.8" text-anchor="middle" class="ax" font-size="12.3" letter-spacing=".2">Nov</text><text x="1204.75" y="681.8" text-anchor="end" class="ax" font-size="12.3" letter-spacing=".2">Dec</text></svg>
<div class="card" style="left:24px;top:739.5px;width:1190px;height:260px;overflow:hidden">
<div class="abs" style="left:0;top:68px;width:1188px;height:41.5px;background:#fafafa;border-top:1px solid #e5e5e5;border-bottom:1px solid #e5e5e5"></div>
<div class="abs" style="left:0;top:149.5px;width:1188px;height:1px;background:#e5e5e5"></div>
<div class="abs" style="left:0;top:190.5px;width:1188px;height:1px;background:#e5e5e5"></div>
</div>
<svg class="ic abs muted" style="left:45.3px;top:764.5px;width:20px;height:20px" viewBox="0 0 24 24" ><circle cx="7.4" cy="7.4" r="3.1"/><circle cx="16.6" cy="7.4" r="3.1"/><circle cx="12" cy="10.9" r="3.05" fill="var(--bg,#fff)"/><path d="M6.3 19.7c.2-2.6 2.5-4.6 5.7-4.6s5.5 2 5.7 4.6"/><path d="M1.95 16.9c.3-2.8 2-4.6 4.5-5"/><path d="M22.05 16.9c-.3-2.8-2-4.6-4.5-5"/></svg>
<div class="t muted m2" style="left:73.2px;top:766.5px;font-size:16.2px;letter-spacing:0.1px;">Employee list</div>
<div class="btn" style="left:774.6px;top:756.5px;width:220px;height:36px;border-radius:8px"></div>
<svg class="ic abs muted" style="left:786.5px;top:766.2px;width:16px;height:16px" viewBox="0 0 24 24" ><circle cx="11" cy="11" r="7.7"/><path d="M16.7 16.7l4.3 4.3"/></svg>
<div class="t muted" style="left:811.7px;top:767.5px;font-size:14.3px;letter-spacing:0.083px;">Search Anything...</div>
<div class="btn" style="left:1002.5px;top:756.5px;width:84px;height:36px;background:#f5f5f5"></div>
<svg class="ic abs" style="left:1015.5px;top:766px;width:16px;height:16px" viewBox="0 0 24 24" ><path d="M4.8 3.8h14.4c1.3 0 2 1.5 1.2 2.5-1.5 2-3.3 3.6-4.9 5.4-.600.7-.900 1.5-.900 2.4v3.3c0 .8-.4 1.5-1.1 1.9l-1.7 1c-1 .6-2.2-.1-2.2-1.3v-4.9c0-.9-.3-1.7-.9-2.4C7.1 9.9 5.3 8.3 3.8 6.3 3 5.3 3.5 3.8 4.8 3.8z"/></svg>
<div class="t m" style="left:1039.3px;top:767.5px;font-size:14.3px;letter-spacing:0.24px;">Filter</div>
<div class="abs" style="left:1094px;top:762.5px;width:1px;height:24px;background:#e5e5e5"></div>
<div class="btn" style="left:1103px;top:756.5px;width:90px;height:36px"></div>
<svg class="ic abs" style="left:1115px;top:766.5px;width:16px;height:16px" viewBox="0 0 24 24" ><path d="M20 12.5V10.6c0-1-.4-2-1.1-2.7l-4.2-4.4C14 2.8 13 2.4 12 2.4H8.5C5.8 2.4 4 4.2 4 6.9v9.6c0 2.7 1.8 4.5 4.5 4.5H10"/><path d="M13 2.7v2.9c0 2 1.2 3.2 3.2 3.2h3"/><path d="M21 18.5h-8M15.5 16L13 18.5l2.5 2.5"/></svg>
<div class="t m" style="left:1137.7px;top:767.5px;font-size:14.3px;letter-spacing:0.46px;">Import</div>
<div class="t muted m2" style="left:82.7px;top:822px;font-size:14.3px;letter-spacing:-0.046px;">User ID</div>
<div class="t muted m2" style="left:207.7px;top:822px;font-size:14.3px;letter-spacing:0.083px;">Name</div>
<div class="t muted m2" style="left:395.2px;top:822px;font-size:14.3px;letter-spacing:0.09px;">Email Address</div>
<div class="t muted m2" style="left:645.7px;top:822px;font-size:14.3px;letter-spacing:0.191px;">Department</div>
<div class="t muted m2" style="left:771.7px;top:822px;font-size:14.3px;letter-spacing:0.288px;">Job Title</div>
<div class="t muted m2" style="left:946.2px;top:822px;font-size:14.3px;letter-spacing:0.05px;">Joined Date</div>
<div class="t muted m2" style="left:1096.2px;top:822px;font-size:14.3px;letter-spacing:0.08px;">Status</div>
<div class="t muted" style="left:82.7px;top:863px;font-size:14.3px;letter-spacing:-0.414px;">EMP-1001</div>
<div class="abs" style="left:208.3px;top:858px;width:24px;height:24px;border-radius:50%;background:radial-gradient(circle at 40% 70%,#d9f5a0 0%,rgba(217,245,160,0) 50%),linear-gradient(150deg,#c4ee6e,#b6e86a 60%,#cdf08c)"></div>
<div class="t m" style="left:242.7px;top:863px;font-size:14.3px;letter-spacing:-0.018px;">John Doe</div>
<div class="t muted" style="left:396.7px;top:863px;font-size:14.3px;letter-spacing:-0.082px;">john.doe@email.com</div>
<div class="pillbg" style="left:645.65px;top:861.65px;width:27.35px"></div>
<div class="t pilltx" style="left:653.1px;top:864.65px;font-size:12.3px;letter-spacing:-0.1px;">IT</div>
<div class="pillbg" style="left:771.2px;top:861.65px;width:121.2px"></div>
<div class="t pilltx" style="left:778.9px;top:864.65px;font-size:12.3px;letter-spacing:0.024px;">Software Engineer</div>
<div class="t muted" style="left:945.7px;top:862.5px;font-size:14.3px;letter-spacing:-0.07px;">01 Jan 2024</div>
<div class="actbg" style="left:1096.4px;top:859.1px;width:53.35px"></div>
<div class="t acttx" style="left:1105.35px;top:864.3px;font-size:12.3px;letter-spacing:0.16px;">Active</div>
<div class="t muted" style="left:82.7px;top:903.75px;font-size:14.3px;letter-spacing:-0.067px;">EMP-1002</div>
<div class="abs" style="left:208.3px;top:898.8px;width:24px;height:24px;border-radius:50%;background:radial-gradient(circle at 35% 75%,#f3c6fa 0%,rgba(243,198,250,0) 55%),linear-gradient(150deg,#e58af2,#dc6aee 55%,#d04fe6)"></div>
<div class="t m" style="left:242.7px;top:903.75px;font-size:14.3px;letter-spacing:-0.06px;">Jane Smith</div>
<div class="t muted" style="left:396.7px;top:903.75px;font-size:14.3px;letter-spacing:-0.088px;">jane.smith@email.com</div>
<div class="pillbg" style="left:645.65px;top:902.4px;width:32.45px"></div>
<div class="t pilltx" style="left:653.8px;top:905.4px;font-size:12.3px;letter-spacing:0.15px;transform:scaleX(.93)">HR</div>
<div class="pillbg" style="left:771.2px;top:902.4px;width:117.6px"></div>
<div class="t pilltx" style="left:779.4px;top:905.4px;font-size:12.3px;letter-spacing:0.206px;">Talent Acquisition</div>
<div class="t muted" style="left:945.2px;top:903.25px;font-size:14.3px;letter-spacing:-0.17px;">12 Feb 2024</div>
<div class="actbg" style="left:1096.4px;top:899.85px;width:53.35px"></div>
<div class="t acttx" style="left:1105.35px;top:905.05px;font-size:12.3px;letter-spacing:0.16px;">Active</div>
<div class="cb" style="left:33.1px;top:821.4px"></div>
<div class="cb" style="left:33.1px;top:861.9px"></div>
<div class="cb" style="left:33.1px;top:902.8px"></div>
</div>
</body>
</html>
